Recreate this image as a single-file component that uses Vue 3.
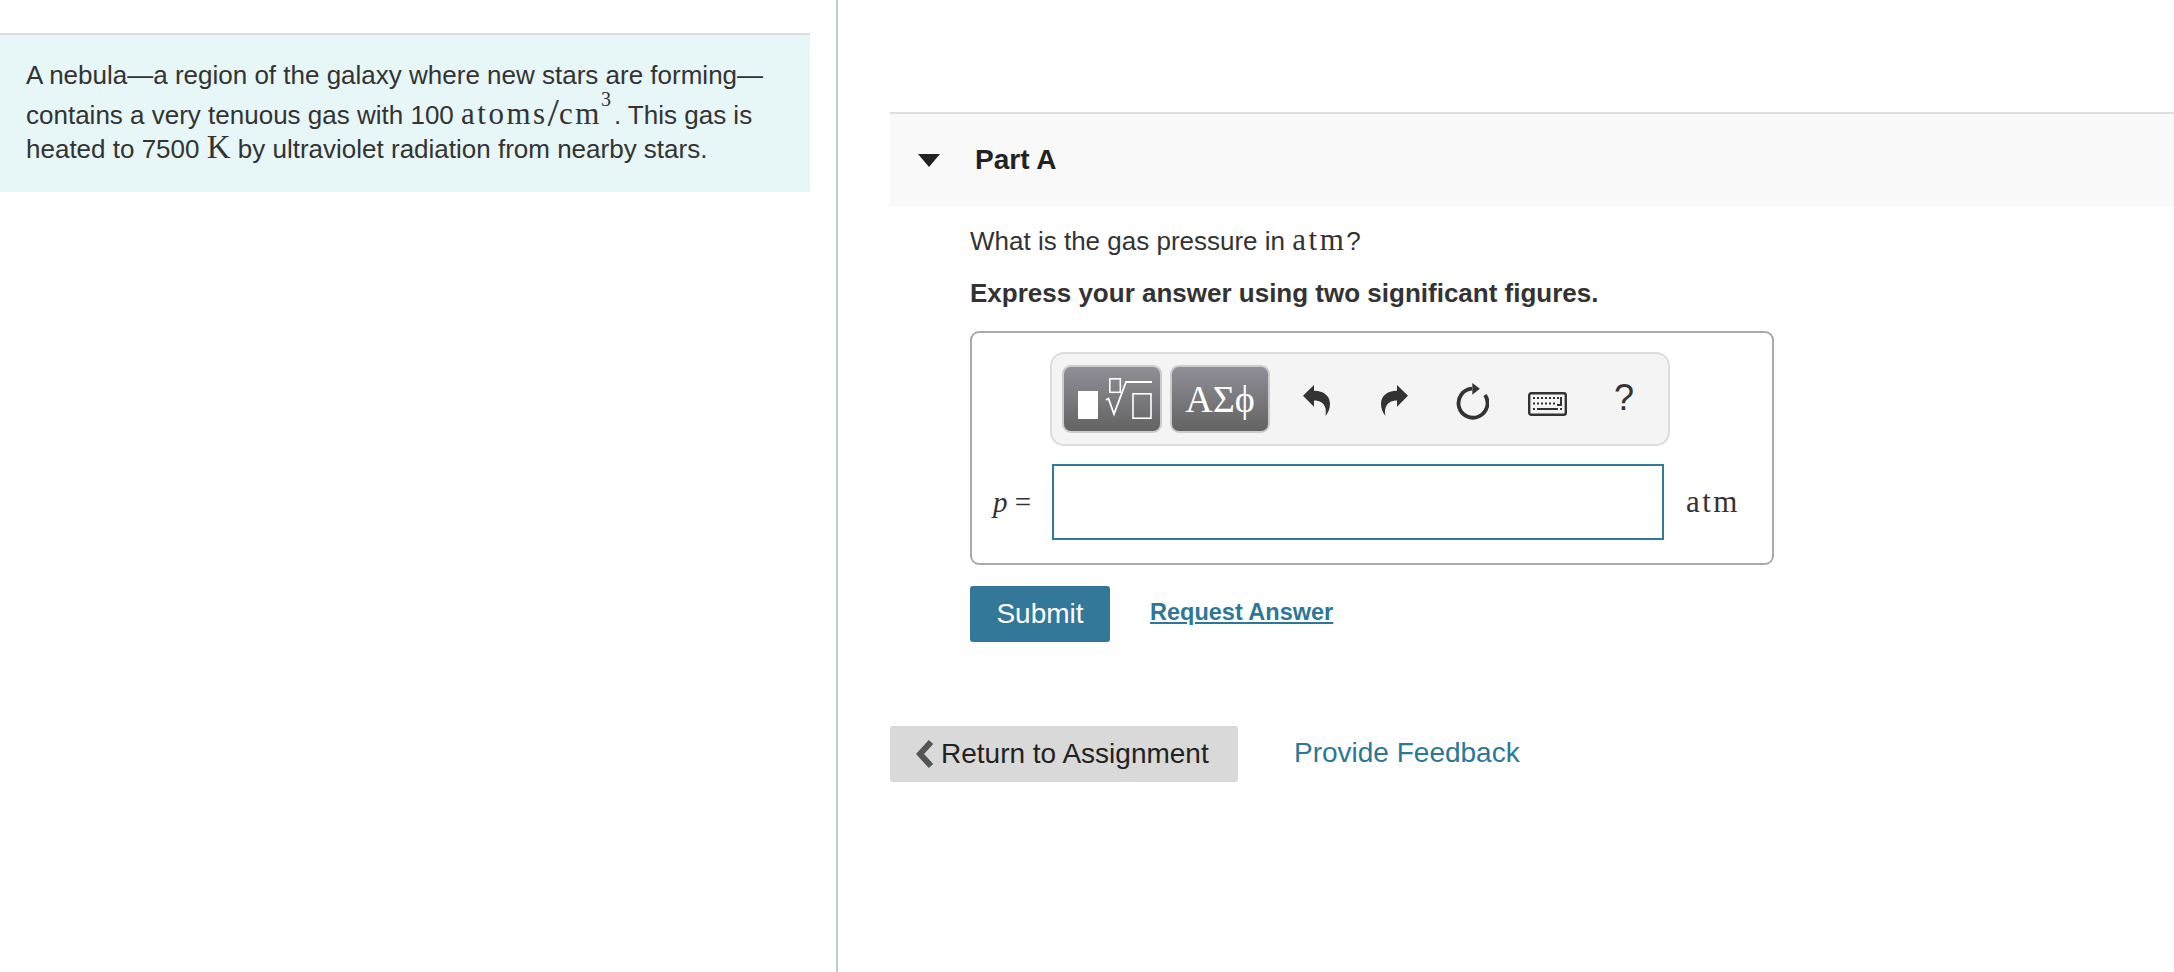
<script setup>
</script>

<template>
  <div class="page">
    <aside class="left">
      <div class="intro">
        <div class="line l1">A nebula—a region of the galaxy where new stars are forming—</div>
        <div class="line l2">contains a very tenuous gas with 100 <span class="math">atoms<span class="slash">/</span>cm<sup class="sup">3</sup></span>. This gas is</div>
        <div class="line l3">heated to 7500 <span class="math k">K</span> by ultraviolet radiation from nearby stars.</div>
      </div>
    </aside>
    <main class="right">
      <header class="part">
        <svg class="caret" width="22" height="13" viewBox="0 0 22 13"><path d="M0 0h22L11 13z" fill="#222"/></svg>
        <h2>Part A</h2>
      </header>
      <section class="body">
        <p class="q">What is the gas pressure in <span class="math">atm</span>?</p>
        <p class="ex">Express your answer using two significant figures.</p>
        <div class="box">
          <div class="toolbar">
            <button class="tbtn">
              <svg width="90" height="60" viewBox="0 0 90 60" fill="none">
                <rect x="11" y="22" width="20" height="28" fill="#fff"/>
                <rect x="42.800" y="9.800" width="10.500" height="13.500" stroke="#fff" stroke-width="1.600"/>
                <path d="M39 31l2.500-1.500L47 45l12-32h26" stroke="#fff" stroke-width="1.800"/>
                <rect x="66" y="24.800" width="18" height="24.400" stroke="#fff" stroke-width="1.600"/>
              </svg>
            </button>
            <button class="tbtn greek">ΑΣϕ</button>
            <svg class="ic undo" width="28" height="32" viewBox="0 0 28 32"><path d="M0 10.700L11 0v5.700C21 5.700 27 11 27 19C27 24 25 28 22.500 31C24 24 22 15.500 11 15.500V21.700z" fill="#333"/></svg>
            <svg class="ic redo" width="28" height="32" viewBox="0 0 28 32"><path d="M27 10.700L16 0v5.700C6 5.700 0 11 0 19C0 24 2 28 4.500 31C3 24 5 15.500 16 15.500V21.700z" fill="#333"/></svg>
            <svg class="ic reset" width="34" height="38" viewBox="0 0 34 38" fill="none"><path d="M17 6.700A14.500 14.500 0 1 0 30 13" stroke="#333" stroke-width="3.800"/><path d="M17.300 1l7.600 5.700-7.600 6z" fill="#333"/></svg>
            <svg class="ic kb" width="39" height="24" viewBox="0 0 39 24" fill="none">
              <rect x="1.200" y="1.200" width="36.600" height="21.600" rx="2" stroke="#333" stroke-width="2.400"/>
              <path d="M5 6h2M9 6h2M13 6h2M17 6h2M21 6h2M25 6h2M29 6h2M5 11.500h2M9 11.500h2M13 11.500h2M17 11.500h2M21 11.500h2M25 11.500h2M5 17h2M9 17h21M32 17h2M33 5v8h-4" stroke="#333" stroke-width="2"/>
            </svg>
            <span class="help">?</span>
          </div>
          <div class="row">
            <span class="label"><i>p</i> =</span>
            <div class="input"></div>
            <span class="math unit">atm</span>
          </div>
        </div>
        <div class="actions">
          <button class="submit">Submit</button>
          <a class="req">Request Answer</a>
        </div>
      </section>
      <footer class="foot">
        <button class="ret">
          <svg width="18" height="28" viewBox="0 0 18 28"><path d="M15 2L4 14l11 12" fill="none" stroke="#555" stroke-width="6"/></svg>
          Return to Assignment
        </button>
        <a class="fb">Provide Feedback</a>
      </footer>
    </main>
  </div>
</template>

<style>
html, body { margin: 0; background: #fff; }
</style>

<style scoped>
.page { display: flex; height: 972px; width: 2174px; overflow: hidden; font-family: "Liberation Sans", Arial, sans-serif; color: #333; font-size: 26px; }
.left { width: 836px; border-right: 2px solid #c3cbd6; padding-top: 33px; box-sizing: content-box; flex: none; }
.intro { width: 810px; height: 159px; box-sizing: border-box; background: #e7f6f6; border-top: 2px solid #dddddd; padding: 0 0 0 26px; overflow: hidden; }
.line { white-space: nowrap; }
.l1 { height: 39px; line-height: 40px; margin-top: 20px; }
.l2 { height: 35px; line-height: 40px; }
.l3 { height: 35px; line-height: 37px; }
.math { font-family: "Liberation Serif", serif; font-size: 31px; letter-spacing: 2.500px; }
.k { font-size: 33px; letter-spacing: 0; }
.slash { font-size: 41px; line-height: 0; font-weight: 400; vertical-align: -2px; letter-spacing: 0; }
.sup { font-size: 20px; line-height: 0; vertical-align: 18px; letter-spacing: 0; margin: 0 3px 0 -1px; }
.right { flex: 1; padding-left: 52px; min-width: 0; }
.part { margin-top: 112px; height: 94px; box-sizing: border-box; border-top: 2px solid #dedede; background: #f9f9f9; display: flex; align-items: center; padding-left: 28px; }
.part h2 { margin: 0 0 0 35px; font-size: 28px; font-weight: 700; color: #222; }
.body { padding-left: 80px; }
.q { margin: 0; padding-top: 14px; height: 47px; line-height: 40px; }
.ex { margin: 0; height: 52px; line-height: 52px; font-weight: 700; }
.box { margin-top: 12px; width: 804px; height: 234px; box-sizing: border-box; border: 2px solid #aaa; border-radius: 9px; padding-top: 19px; }
.toolbar { margin-left: 78px; width: 620px; height: 94px; box-sizing: border-box; background: #f4f4f4; border: 2px solid #ddd; border-radius: 14px; display: flex; align-items: center; padding-left: 10px; }
.tbtn { width: 100px; height: 68px; box-sizing: border-box; border: 2px solid #ccc; border-radius: 9px; background: linear-gradient(#908f97, #636363); color: #fff; padding: 0; margin-right: 8px; display: flex; align-items: center; justify-content: center; font-family: "Liberation Serif", serif; font-size: 38px; }
.ic { flex: none; position: relative; top: 2px; }
.undo { margin-left: 25px; }
.redo { margin-left: 50px; }
.reset { margin-left: 46px; }
.kb { margin-left: 39px; margin-top: 6px; }
.help { margin-left: 47px; font-size: 36px; color: #333; line-height: 1; margin-top: -3px; }
.row { display: flex; margin-top: 18px; align-items: center; }
.label { width: 80px; padding-left: 21px; box-sizing: border-box; font-family: "Liberation Serif", serif; font-size: 29px; }
.input { width: 612px; height: 76px; box-sizing: border-box; border: 2px solid #337a99; background: #fff; }
.unit { margin-left: 22px; }
.actions { margin-top: 21px; display: flex; align-items: center; }
.submit { width: 140px; height: 56px; background: #337899; color: #fff; border: 0; border-radius: 3px; font-family: inherit; font-size: 28px; }
.req { margin-left: 40px; color: #2d7797; font-weight: 700; text-decoration: underline; font-size: 23.500px; margin-top: -4px; }
.foot { margin-top: 84px; display: flex; align-items: center; }
.ret { width: 348px; height: 56px; background: #d9d9d9; border: 0; border-radius: 3px; color: #222; font-family: inherit; font-size: 28px; display: flex; align-items: center; gap: 7px; padding: 0 0 0 26px; box-sizing: border-box; white-space: nowrap; }
.fb { margin-left: 56px; color: #2d7797; font-size: 28px; margin-top: -2px; }
</style>
